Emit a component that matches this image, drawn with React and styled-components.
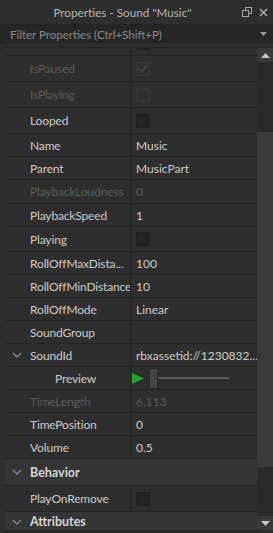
import React from 'react';
import styled, { createGlobalStyle } from 'styled-components';

const GlobalStyle = createGlobalStyle`
  html, body {
    margin: 0;
    padding: 0;
    background: #2e2e2e;
  }
  body {
    font-family: Lato, "Noto Sans", sans-serif;
    font-size: 12px;
  }
`;

const Panel = styled.div`
  width: 273px;
  height: 533px;
  display: flex;
  flex-direction: column;
  background: #2e2e2e;
  overflow: hidden;
`;

const TitleBar = styled.div`
  height: 25px;
  display: flex;
  align-items: center;
  border-bottom: 1px solid #232323;
  box-sizing: border-box;
`;

const Title = styled.div`
  flex: 1;
  text-align: center;
  color: #b4b4b4;
  font-size: 11.7px;
  padding-left: 3px;
`;

const TitleIcons = styled.div`
  display: flex;
  gap: 7px;
  align-items: center;
  padding-right: 5px;
`;

const FilterBar = styled.div`
  height: 18px;
  display: flex;
  align-items: center;
  justify-content: space-between;
  background: #262626;
  color: #8c8c8c;
  padding: 0 6px 0 10px;
  font-size: 11.5px;
`;

const Body = styled.div`
  flex: 1;
  display: flex;
  margin-top: 4px;
  padding-left: 5px;
  min-height: 0;
`;

const List = styled.div`
  flex: 1;
  overflow: hidden;
  border-top: 1px solid #242424;
  border-bottom: 2px solid #232323;
  margin-bottom: 1px;
`;

const Scroller = styled.div`
  width: 16px;
  display: flex;
  flex-direction: column;
  background: #2a2a2a;
  border-top: 1px solid #242424;
  margin-bottom: 3px;
`;

const ScrollButton = styled.div`
  height: 14px;
  background: #393939;
  display: flex;
  align-items: center;
  justify-content: center;
`;

const ScrollTrack = styled.div`
  flex: 1;
  display: flex;
  flex-direction: column;
  padding: 70px 0 49px;
`;

const ScrollThumb = styled.div`
  flex: 1;
  background: #3a3a3a;
`;

const Row = styled.div`
  display: grid;
  grid-template-columns: 125px 1fr;
  height: ${({ $h }) => $h || 23}px;
  border-bottom: 1px solid #242424;
  box-sizing: border-box;
  margin-top: ${({ $offset }) => $offset || 0}px;
`;

const Label = styled.div`
  display: flex;
  align-items: center;
  padding-left: ${({ $indent }) => $indent || 25}px;
  color: ${({ $disabled }) => ($disabled ? '#5c5c5c' : '#cccccc')};
  letter-spacing: -0.15px;
  white-space: nowrap;
  overflow: hidden;
  position: relative;
`;

const Chevron = styled.span`
  position: absolute;
  left: 7px;
  top: 50%;
  transform: translateY(-50%);
  display: flex;
`;

const Value = styled.div`
  display: flex;
  align-items: center;
  border-left: 1px solid #242424;
  padding-left: 5px;
  color: ${({ $disabled }) => ($disabled ? '#5c5c5c' : '#cfcfcf')};
  white-space: nowrap;
  overflow: hidden;
`;

const Checkbox = styled.div`
  width: 14px;
  height: 14px;
  box-sizing: border-box;
  background: ${({ $disabled }) => ($disabled ? '#2f2f2f' : '#232323')};
  border: 1px solid ${({ $disabled }) => ($disabled ? '#393939' : '#1d1d1d')};
  border-radius: 1px;
  display: flex;
  align-items: center;
  justify-content: center;
`;

const Header = styled.div`
  height: ${({ $h }) => $h || 27}px;
  display: flex;
  align-items: center;
  background: #353535;
  border-bottom: 1px solid #242424;
  box-sizing: border-box;
  color: #d6d6d6;
  font-weight: bold;
  font-size: 12.5px;
  padding-left: 25px;
  position: relative;
`;

const Preview = styled.div`
  display: flex;
  align-items: center;
  margin-left: -4px;
`;

const SliderThumb = styled.div`
  width: 7px;
  height: 19px;
  background: #464646;
  border: 1px solid #2a2a2a;
  margin-left: 5px;
`;

const SliderTrack = styled.div`
  width: 71px;
  height: 2px;
  background: #5a5a5a;
`;

const ChevronIcon = () => (
  <svg width="10" height="6" viewBox="0 0 10 6">
    <path d="M1 1 L5 5 L9 1" fill="none" stroke="#8a8a8a" strokeWidth="1.3" />
  </svg>
);

const Check = ({ checked, disabled }) => (
  <Checkbox $disabled={disabled}>
    {checked && (
      <svg width="10" height="9" viewBox="0 0 10 9">
        <path d="M1 4.5 L4 7.5 L9 1" fill="none" stroke="#4a4a4a" strokeWidth="1.5" />
      </svg>
    )}
  </Checkbox>
);

const props = [
  { label: 'IsPaused', check: true, checked: true, disabled: true, h: 26 },
  { label: 'IsPlaying', check: true, disabled: true, h: 26 },
  { label: 'Looped', check: true, h: 26 },
  { label: 'Name', value: 'Music' },
  { label: 'Parent', value: 'MusicPart' },
  { label: 'PlaybackLoudness', value: '0', disabled: true, h: 24 },
  { label: 'PlaybackSpeed', value: '1' },
  { label: 'Playing', check: true, h: 25 },
  { label: 'RollOffMaxDista...', value: '100' },
  { label: 'RollOffMinDistance', value: '10' },
  { label: 'RollOffMode', value: 'Linear' },
  { label: 'SoundGroup', value: '' },
  { label: 'SoundId', value: 'rbxassetid://1230832...', expand: true },
  { label: 'Preview', preview: true, indent: 50 },
  { label: 'TimeLength', value: '6.113', disabled: true },
  { label: 'TimePosition', value: '0' },
  { label: 'Volume', value: '0.5' },
];

export default function App() {
  return (
    <Panel>
      <GlobalStyle />
      <TitleBar>
        <Title>Properties - Sound "Music"</Title>
        <TitleIcons>
          <svg width="10" height="10" viewBox="0 0 10 10">
            <rect x="3.5" y="0.5" width="6" height="6" fill="none" stroke="#a8a8a8" />
            <rect x="0.5" y="3.5" width="6" height="6" fill="#2e2e2e" stroke="#a8a8a8" />
          </svg>
          <svg width="9" height="9" viewBox="0 0 9 9">
            <path d="M1 1 L8 8 M8 1 L1 8" stroke="#b0b0b0" strokeWidth="1.4" />
          </svg>
        </TitleIcons>
      </TitleBar>
      <FilterBar>
        <span>Filter Properties (Ctrl+Shift+P)</span>
        <svg width="7" height="4" viewBox="0 0 7 4">
          <path d="M0 0 H7 L3.5 4 Z" fill="#9a9a9a" />
        </svg>
      </FilterBar>
      <Body>
        <List>
          <Row $h={26} $offset={-18}>
            <Label />
            <Value>
              <Check />
            </Value>
          </Row>
          {props.map((p) => (
            <Row key={p.label} $h={p.h}>
              <Label $disabled={p.disabled} $indent={p.indent}>
                {p.expand && (
                  <Chevron>
                    <ChevronIcon />
                  </Chevron>
                )}
                {p.label}
              </Label>
              <Value $disabled={p.disabled}>
                {p.check && <Check checked={p.checked} disabled={p.disabled} />}
                {p.preview && (
                  <Preview>
                    <svg width="12" height="11" viewBox="0 0 12 11">
                      <path d="M0 0 L12 5.5 L0 11 Z" fill="#1fa52b" />
                    </svg>
                    <SliderThumb />
                    <SliderTrack />
                  </Preview>
                )}
                {p.value}
              </Value>
            </Row>
          ))}
          <Header>
            <Chevron>
              <ChevronIcon />
            </Chevron>
            Behavior
          </Header>
          <Row $h={26}>
            <Label>PlayOnRemove</Label>
            <Value>
              <Check />
            </Value>
          </Row>
          <Header $h={20}>
            <Chevron>
              <ChevronIcon />
            </Chevron>
            Attributes
          </Header>
        </List>
        <Scroller>
          <ScrollButton>
            <svg width="9" height="5" viewBox="0 0 9 5">
              <path d="M0 5 L4.5 0 L9 5 Z" fill="#c8c8c8" />
            </svg>
          </ScrollButton>
          <ScrollTrack>
            <ScrollThumb />
          </ScrollTrack>
          <ScrollButton>
            <svg width="9" height="5" viewBox="0 0 9 5">
              <path d="M0 0 L4.5 5 L9 0 Z" fill="#c8c8c8" />
            </svg>
          </ScrollButton>
        </Scroller>
      </Body>
    </Panel>
  );
}
